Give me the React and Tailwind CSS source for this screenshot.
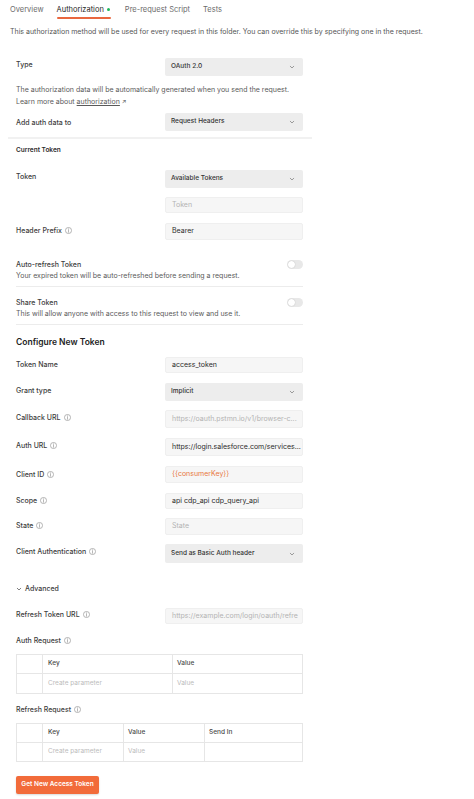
import React from 'react'

function Info() {
  return (
    <svg width="7" height="7" viewBox="0 0 16 16" className="inline-block ml-[3px] -mt-[1px] align-middle" fill="none" stroke="#8a8a8a" strokeWidth="1.4">
      <circle cx="8" cy="8" r="7" />
      <path d="M8 7v5M8 4.2v.6" strokeLinecap="round" />
    </svg>
  )
}

function Chevron() {
  return (
    <svg width="6" height="6" viewBox="0 0 12 12" fill="none" stroke="#777" strokeWidth="1.4">
      <path d="M2.5 4.5L6 8l3.5-3.5" strokeLinecap="round" strokeLinejoin="round" />
    </svg>
  )
}

function Select({ value, h = 'h-[18px]' }) {
  return (
    <div className={`w-[138px] ${h} bg-[#ededed] rounded-[2px] flex items-center justify-between pl-[6px] pr-[8px] text-[6.5px] font-medium text-[#333]`}>
      <span>{value}</span>
      <Chevron />
    </div>
  )
}

function Input({ value, placeholder, orange, h = 'h-[17px]' }) {
  return (
    <div className={`w-[138px] ${h} bg-[#f6f6f6] border border-[#efefef] rounded-[2px] flex items-center px-[6px] text-[7px] overflow-hidden whitespace-nowrap`}>
      {value ? (
        <span className={orange ? 'text-[#e8773f]' : 'text-[#2b2b2b]'}>{value}</span>
      ) : (
        <span className="text-[#b3b3b3]">{placeholder}</span>
      )}
    </div>
  )
}

function Row({ label, info, mt, pt = 'pt-[3px]', children }) {
  return (
    <div className={`flex items-start ${mt}`}>
      <div className={`w-[149px] ${pt} leading-[10px] text-[7px] font-medium text-[#3d3d3d]`}>
        {label}
        {info && <Info />}
      </div>
      {children}
    </div>
  )
}

function Toggle() {
  return (
    <div className="w-[16px] h-[9px] rounded-full bg-[#e8e8e8] flex items-center px-[1px]">
      <div className="w-[7px] h-[7px] rounded-full bg-white shadow-[0_0_1px_rgba(0,0,0,0.3)]" />
    </div>
  )
}

export default function App() {
  return (
    <div className="w-[474px] min-h-[799px] bg-white" style={{ fontFamily: 'Inter, "Noto Sans", sans-serif' }}>
      {/* Tabs */}
      <div className="flex h-[19px] pl-[10px] gap-[13px] text-[7.5px] text-[#6b6b6b]">
        <div className="flex items-center">Overview</div>
        <div className="flex items-center relative text-[#262626] pr-[1px]">
          Authorization
          <span className="ml-[3px] w-[3px] h-[3px] rounded-full bg-[#1db65a]" />
          <div className="absolute left-0 right-0 bottom-0 h-[2px] bg-[#e9673f] rounded-full" />
        </div>
        <div className="flex items-center ml-[1px]">Pre-request Script</div>
        <div className="flex items-center">Tests</div>
      </div>

      <div className="mt-[8px] pl-[10px] leading-[10px] text-[7px] text-[#555]">
        This authorization method will be used for every request in this folder. You can override this by specifying one in the request.
      </div>

      <div className="w-[304px] ml-[8px] pl-[8px]">
        <Row label="Type" mt="mt-[21px]" pt="pt-[2px]">
          <Select value="OAuth 2.0" />
        </Row>
        <div className="mt-[8px] leading-[12px] text-[7px] text-[#5a5a5a]">
          <div>The authorization data will be automatically generated when you send the request.</div>
          <div>
            Learn more about <span className="underline">authorization</span> <span className="text-[6px]">↗</span>
          </div>
        </div>
        <Row label="Add auth data to" mt="mt-[5px]" pt="pt-[5px]">
          <Select value="Request Headers" />
        </Row>
      </div>
      <div className="w-[304px] ml-[8px] mt-[6px] h-[2px] bg-[#f1f1f1]" />

      <div className="w-[303px] pl-[16px]">
        <div className="mt-[6px] leading-[10px] text-[6.5px] font-semibold text-[#2a2a2a]">Current Token</div>
        <Row label="Token" mt="mt-[15px]" pt="pt-[2px]">
          <Select value="Available Tokens" />
        </Row>
        <div className="flex mt-[9px]">
          <div className="w-[149px]" />
          <Input placeholder="Token" h="h-[16px]" />
        </div>
        <Row label="Header Prefix" info mt="mt-[10px]">
          <Input value="Bearer" />
        </Row>

        <div className="mt-[19px] flex items-start justify-between">
          <div className="leading-[11px] text-[7px]">
            <div className="font-medium text-[#3d3d3d]">Auto-refresh Token</div>
            <div className="text-[#5a5a5a]">Your expired token will be auto-refreshed before sending a request.</div>
          </div>
          <div className="mt-[1px]"><Toggle /></div>
        </div>
        <div className="mt-[5px] h-px bg-[#ececec]" />

        <div className="mt-[10px] flex items-start justify-between">
          <div className="leading-[11px] text-[7px]">
            <div className="font-medium text-[#3d3d3d]">Share Token</div>
            <div className="text-[#5a5a5a]">This will allow anyone with access to this request to view and use it.</div>
          </div>
          <div className="mt-[1px]"><Toggle /></div>
        </div>
        <div className="mt-[5px] h-px bg-[#ececec]" />

        <div className="mt-[11px] leading-[12px] text-[8.5px] font-semibold text-[#222]">Configure New Token</div>
        <Row label="Token Name" mt="mt-[9px]">
          <Input value="access_token" h="h-[16px]" />
        </Row>
        <Row label="Grant type" mt="mt-[10px]">
          <Select value="Implicit" />
        </Row>
        <Row label="Callback URL" info mt="mt-[9px]">
          <Input placeholder="https://oauth.pstmn.io/v1/browser-c..." h="h-[18px]" />
        </Row>
        <Row label="Auth URL" info mt="mt-[10px]">
          <Input value="https://login.salesforce.com/services..." h="h-[18px]" />
        </Row>
        <Row label="Client ID" info mt="mt-[10px]" pt="pt-[4px]">
          <Input value="{{consumerKey}}" orange />
        </Row>
        <Row label="Scope" info mt="mt-[10px]">
          <Input value="api cdp_api cdp_query_api" h="h-[16px]" />
        </Row>
        <Row label="State" info mt="mt-[9px]">
          <Input placeholder="State" />
        </Row>
        <Row label="Client Authentication" info mt="mt-[9px]">
          <Select value="Send as Basic Auth header" h="h-[19px]" />
        </Row>

        <div className="mt-[21px] leading-[10px] text-[7px] font-medium text-[#3d3d3d] flex items-center">
          <svg width="6" height="6" viewBox="0 0 12 12" fill="none" stroke="#555" strokeWidth="1.5" className="mr-[3px]">
            <path d="M2.5 4.5L6 8l3.5-3.5" strokeLinecap="round" strokeLinejoin="round" />
          </svg>
          Advanced
        </div>
        <Row label="Refresh Token URL" info mt="mt-[14px]" pt="pt-[2px]">
          <Input placeholder="https://example.com/login/oauth/refre" h="h-[16px]" />
        </Row>

        <div className="mt-[12px] leading-[10px] text-[7px] font-medium text-[#3d3d3d]">
          Auth Request<Info />
        </div>
        <div className="mt-[8px] border border-[#e6e6e6] text-[6.5px]">
          <div className="flex h-[19px] border-b border-[#e6e6e6]">
            <div className="w-[26px] border-r border-[#e6e6e6]" />
            <div className="w-[130px] border-r border-[#e6e6e6] flex items-center pl-[5px] font-medium text-[#4a4a4a]">Key</div>
            <div className="flex-1 flex items-center pl-[4px] font-medium text-[#4a4a4a]">Value</div>
          </div>
          <div className="flex h-[19px]">
            <div className="w-[26px] border-r border-[#e6e6e6]" />
            <div className="w-[130px] border-r border-[#e6e6e6] flex items-center pl-[5px] text-[#bbb]">Create parameter</div>
            <div className="flex-1 flex items-center pl-[4px] text-[#bbb]">Value</div>
          </div>
        </div>

        <div className="mt-[11px] leading-[10px] text-[7px] font-medium text-[#3d3d3d]">
          Refresh Request<Info />
        </div>
        <div className="mt-[8px] border border-[#e6e6e6] text-[6.5px]">
          <div className="flex h-[19px] border-b border-[#e6e6e6]">
            <div className="w-[26px] border-r border-[#e6e6e6]" />
            <div className="w-[81px] border-r border-[#e6e6e6] flex items-center pl-[5px] font-medium text-[#4a4a4a]">Key</div>
            <div className="w-[81px] border-r border-[#e6e6e6] flex items-center pl-[4px] font-medium text-[#4a4a4a]">Value</div>
            <div className="flex-1 flex items-center pl-[4px] font-medium text-[#4a4a4a]">Send In</div>
          </div>
          <div className="flex h-[18px]">
            <div className="w-[26px] border-r border-[#e6e6e6]" />
            <div className="w-[81px] border-r border-[#e6e6e6] flex items-center pl-[5px] text-[#bbb]">Create parameter</div>
            <div className="w-[81px] border-r border-[#e6e6e6] flex items-center pl-[4px] text-[#bbb]">Value</div>
            <div className="flex-1" />
          </div>
        </div>

        <button className="mt-[14px] w-[83px] h-[18px] rounded-[2px] bg-[#f26b3a] text-white text-[6.5px] font-semibold shadow-[0_1px_2px_rgba(0,0,0,0.15)]">
          Get New Access Token
        </button>
      </div>
    </div>
  )
}
